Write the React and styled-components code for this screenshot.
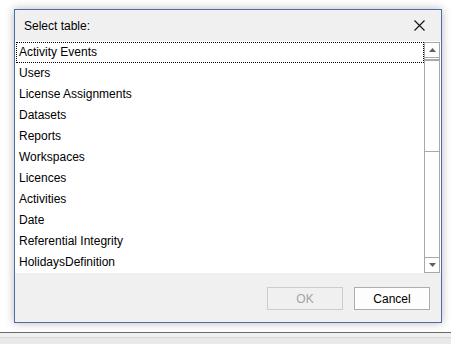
import React from 'react'
import styled, { createGlobalStyle } from 'styled-components'

const GlobalStyle = createGlobalStyle`
  html, body {
    margin: 0;
    padding: 0;
    background: #ffffff;
    font-family: 'Liberation Sans', Arial, sans-serif;
  }
`

const Page = styled.div`
  width: 451px;
  height: 344px;
  display: flex;
  flex-direction: column;
  overflow: hidden;
`

const Stage = styled.div`
  height: 323px;
  padding: 9px 0 0 14px;
  box-sizing: border-box;
  margin-bottom: 9px;
`

const Dialog = styled.div`
  width: 428px;
  height: 314px;
  box-sizing: border-box;
  border: 1px solid #4c6ea8;
  background: #f0f0f0;
  box-shadow: 0 0 9px rgba(0, 0, 0, 0.28);
  display: flex;
  flex-direction: column;
`

const TitleBar = styled.div`
  height: 31px;
  flex: none;
  display: flex;
  align-items: center;
  justify-content: space-between;
  padding: 0 16px 0 9px;
  font-size: 12px;
  color: #000;
`

const CloseBtn = styled.svg`
  width: 11px;
  height: 11px;
  display: block;
`

const ListBox = styled.div`
  height: 232px;
  flex: none;
  background: #fff;
  display: flex;
  padding: 1px 1px 0 1px;
  box-sizing: border-box;
`

const Rows = styled.div`
  flex: 1;
  display: flex;
  flex-direction: column;
`

const Row = styled.div`
  height: 21px;
  box-sizing: border-box;
  padding: 0 0 2px 2px;
  display: flex;
  align-items: center;
  font-size: 12px;
  color: #000;
  border: 1px dotted ${p => (p.$focused ? '#000' : 'transparent')};
`

const Scrollbar = styled.div`
  width: 16px;
  box-sizing: border-box;
  border: 1px solid #a8a8a8;
  display: flex;
  flex-direction: column;
`

const ArrowBtn = styled.div`
  height: 15px;
  flex: none;
  display: flex;
  align-items: center;
  justify-content: center;
  border-bottom: ${p => (p.$top ? '1px solid #a8a8a8' : 'none')};
  border-top: ${p => (p.$top ? 'none' : '1px solid #a8a8a8')};
  box-sizing: border-box;
`

const Track = styled.div`
  flex: 1;
  display: flex;
  flex-direction: column;
`

const Thumb = styled.div`
  height: 93px;
  box-sizing: border-box;
  border-top: 2px solid #a8a8a8;
  border-bottom: 1px solid #a8a8a8;
  margin-top: 1px;
`

const Footer = styled.div`
  flex: 1;
  display: flex;
  justify-content: flex-end;
  align-items: flex-start;
  gap: 11px;
  padding: 14px 11px 0 0;
`

const Button = styled.button`
  width: 76px;
  height: 23px;
  box-sizing: border-box;
  font-family: inherit;
  font-size: 12px;
  padding: 0;
  border: 1px solid ${p => (p.disabled ? '#cccccc' : '#adadad')};
  background: ${p => (p.disabled ? '#f0f0f0' : '#fdfdfd')};
  color: ${p => (p.disabled ? '#a3a3a3' : '#000')};
`

const BottomStrip = styled.div`
  flex: 1;
  border-top: 1px solid #6a6a6a;
  background: linear-gradient(#f0f0f0 0 4px, #d8d8d8 4px 5px, #e9e9e9 5px);
`

const tables = [
  'Activity Events',
  'Users',
  'License Assignments',
  'Datasets',
  'Reports',
  'Workspaces',
  'Licences',
  'Activities',
  'Date',
  'Referential Integrity',
  'HolidaysDefinition',
]

const App = () => {
  return (
    <Page>
      <GlobalStyle />
      <Stage>
        <Dialog>
          <TitleBar>
            <span>Select table:</span>
            <CloseBtn viewBox="0 0 11 11">
              <path d="M0.5 0.5 L10.5 10.5 M10.5 0.5 L0.5 10.5" stroke="#111" strokeWidth="1.1" fill="none" />
            </CloseBtn>
          </TitleBar>
          <ListBox>
            <Rows>
              {tables.map((t, i) => (
                <Row key={t} $focused={i === 0}>{t}</Row>
              ))}
            </Rows>
            <Scrollbar>
              <ArrowBtn $top>
                <svg width="7" height="4" viewBox="0 0 7 4"><path d="M0 4 L3.5 0 L7 4 Z" fill="#606060" /></svg>
              </ArrowBtn>
              <Track>
                <Thumb />
              </Track>
              <ArrowBtn>
                <svg width="7" height="4" viewBox="0 0 7 4"><path d="M0 0 L3.5 4 L7 0 Z" fill="#606060" /></svg>
              </ArrowBtn>
            </Scrollbar>
          </ListBox>
          <Footer>
            <Button disabled>OK</Button>
            <Button>Cancel</Button>
          </Footer>
        </Dialog>
      </Stage>
      <BottomStrip />
    </Page>
  )
}

export default App
